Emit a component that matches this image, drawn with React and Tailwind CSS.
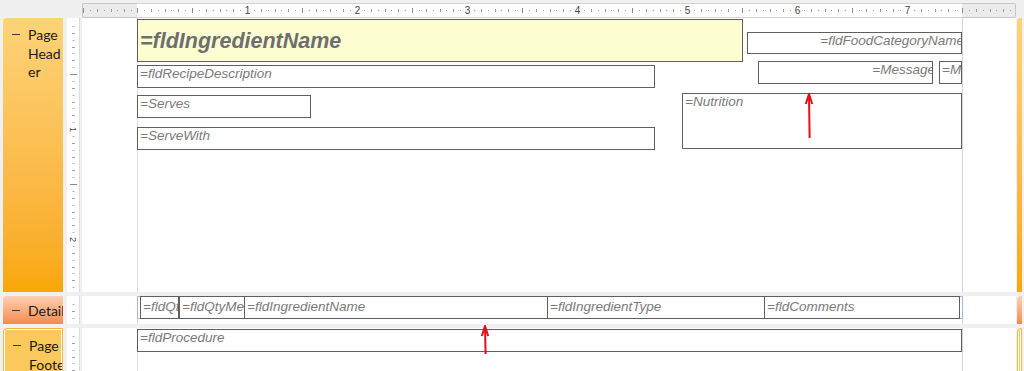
const PPI = 110;
const STEP = PPI / 16;
const ORIGIN_X = 137;

function HTicks({ from, width }) {
  const marks = [];
  const kStart = Math.ceil((from - ORIGIN_X) / STEP);
  const kEnd = Math.floor((from + width - ORIGIN_X) / STEP);
  for (let k = kStart; k <= kEnd; k++) {
    const x = Math.round(ORIGIN_X + k * STEP - from) + 0.5;
    const i = ((k % 16) + 16) % 16;
    if (i === 0 && k > 0) {
      marks.push(
        <text key={k} x={x} y={10} textAnchor="middle" fontSize="10" fill="#444" fontFamily="Liberation Sans, sans-serif">
          {k / 16}
        </text>
      );
    } else if (i === 8 || k === 0) {
      marks.push(<line key={k} x1={x} x2={x} y1={4} y2={9} stroke="#8a8a8a" strokeWidth="1" />);
    } else if (i % 2 === 0) {
      marks.push(<line key={k} x1={x} x2={x} y1={5} y2={8} stroke="#9a9a9a" strokeWidth="1" />);
    } else {
      marks.push(<rect key={k} x={x - 0.5} y={6} width={1} height={1} fill="#9a9a9a" />);
    }
  }
  return (
    <svg width={width} height={13} className="block">
      {marks}
    </svg>
  );
}

function VRuler({ height }) {
  const marks = [];
  const kEnd = Math.floor(height / STEP);
  for (let k = 1; k <= kEnd; k++) {
    const y = Math.round(1 + k * STEP) + 0.5;
    const i = k % 16;
    if (i === 0) {
      marks.push(
        <text
          key={k}
          x={6}
          y={y}
          transform={`rotate(90 6 ${y})`}
          textAnchor="middle"
          dominantBaseline="central"
          fontSize="9"
          fill="#444"
          fontFamily="Liberation Sans, sans-serif"
        >
          {k / 16}
        </text>
      );
    } else if (i === 8) {
      marks.push(<line key={k} x1={3} x2={10} y1={y} y2={y} stroke="#8a8a8a" />);
    } else if (i % 2 === 0) {
      marks.push(<line key={k} x1={5} x2={8} y1={y} y2={y} stroke="#a0a0a0" />);
    } else {
      marks.push(<line key={k} x1={5.5} x2={7.5} y1={y} y2={y} stroke="#b0b0b0" />);
    }
  }
  return (
    <div className="w-[12px] shrink-0 bg-white">
      <svg width={12} height={height} className="block">
        {marks}
      </svg>
    </div>
  );
}

function Band({ lines, className, pt }) {
  return (
    <div className={`ml-[3px] w-[60px] shrink-0 overflow-hidden ${className}`}>
      <div className={`flex gap-[8px] pl-[9px] ${pt}`}>
        <div className="mt-[8px] h-px w-[8px] shrink-0 bg-[#3a3a3a]" />
        <div className="font-['Lato',sans-serif] text-[14px] leading-[18.67px] text-[#1a1a1a]">
          {lines.map((l) => (
            <div key={l} className="whitespace-nowrap">
              {l}
            </div>
          ))}
        </div>
      </div>
    </div>
  );
}

function Field({ text, className, align = "left" }) {
  return (
    <div
      className={`absolute flex overflow-hidden border border-[#5f5f5f] bg-white ${
        align === "right" ? "justify-end" : "pl-[2px]"
      } ${className}`}
    >
      <span className={`whitespace-nowrap text-[13.5px] italic leading-[16px] text-[#7a7a7a] ${align === "right" ? "mr-[-3px]" : ""}`}>
        {text}
      </span>
    </div>
  );
}

// detail row cells sit side by side inside the layout outline
function Cell({ text, width }) {
  return (
    <div className={`flex h-[23px] shrink-0 overflow-hidden border border-[#5f5f5f] bg-white pl-[2px] pt-[2px] ${width}`}>
      <span className="whitespace-nowrap text-[13.5px] italic leading-[16px] text-[#7a7a7a]">{text}</span>
    </div>
  );
}

function Section({ height, band, strip, children }) {
  return (
    <div className="flex" style={{ height }}>
      {band}
      <div className="w-[4px] shrink-0" />
      <VRuler height={height} />
      <div className="w-[3px] shrink-0 border-l border-[#dcdcdc]" />
      <div className="relative w-[934px] shrink-0 overflow-hidden bg-white">
        <div className="absolute left-[55px] top-0 h-full w-px bg-[#dedede]" />
        <div className="absolute left-[880px] top-0 h-full w-px bg-[#d4d4d4]" />
        {children}
      </div>
      <div className="w-[1px] shrink-0" />
      <div className={`w-[5px] shrink-0 ${strip}`} />
    </div>
  );
}

function Arrow({ className, length }) {
  return (
    <svg width={12} height={length} className={`absolute ${className}`}>
      <path d={`M6 1 L6.6 ${length - 1}`} stroke="#e3101c" strokeWidth="2" fill="none" />
      <path d="M2.8 11 L6 1 L9.2 11" stroke="#e3101c" strokeWidth="2" fill="none" strokeLinejoin="miter" />
    </svg>
  );
}

const headerBand = "rounded-tl-[4px] bg-gradient-to-b from-[#fdd378] to-[#f9a700]";
const detailBand = "rounded-tl-[4px] bg-gradient-to-b from-[#fcd0b2] to-[#f58a4c]";
const footerBand = "rounded-tl-[4px] border border-[#f7b53a] bg-[#fbc85c] shadow-[inset_0_0_0_1px_#ffffff]";

export default function App() {
  return (
    <div className="relative h-[371px] w-[1024px] overflow-hidden bg-[#f0f0f0] font-['Liberation_Sans',Arial,sans-serif]">
      <div className="flex h-[18px] items-start pt-[3px]">
        <div className="w-[82px] shrink-0" />
        <div className="w-[55px] shrink-0 rounded-l-[2px] border border-r-0 border-[#c6c6c6] bg-[#ebebeb]">
          <HTicks from={82} width={53} />
        </div>
        <div className="w-[825px] shrink-0 border-y border-[#d4d4d4] bg-white">
          <HTicks from={137} width={825} />
        </div>
        <div className="w-[54px] shrink-0 rounded-r-[2px] border border-l-0 border-[#c6c6c6] bg-[#ebebeb]">
          <HTicks from={962} width={53} />
        </div>
      </div>

      <Section
        height={274}
        strip={headerBand}
        band={<Band className={headerBand} pt="pt-[8px]" lines={["Page", "Head", "er"]} />}
      >
        <div className="absolute left-[55px] top-[1px] flex h-[43px] w-[606px] items-center overflow-hidden border border-[#5f5f5f] bg-[#fdfdd2] pl-[2px] pt-[2px]">
          <span className="whitespace-nowrap text-[21.5px] font-bold italic text-[#6e6e6e]">=fldIngredientName</span>
        </div>
        <Field text="=fldRecipeDescription" className="left-[55px] top-[47px] h-[23px] w-[518px]" />
        <Field text="=Serves" className="left-[55px] top-[77px] h-[23px] w-[174px]" />
        <Field text="=ServeWith" className="left-[55px] top-[109px] h-[23px] w-[518px]" />
        <Field text="=fldFoodCategoryName" align="right" className="left-[665px] top-[14px] h-[22px] w-[215px]" />
        <Field text="=Message" align="right" className="left-[676px] top-[43px] h-[23px] w-[175px]" />
        <Field text="=M" className="left-[857px] top-[43px] h-[23px] w-[23px]" />
        <Field text="=Nutrition" className="left-[600px] top-[75px] h-[56px] w-[280px]" />
      </Section>

      <div className="h-[4px]" />

      <Section
        height={28}
        strip={detailBand}
        band={<Band className={detailBand} pt="pt-[6px]" lines={["Detail"]} />}
      >
        <div className="absolute left-[55px] top-0 flex h-[23px] w-[826px] items-start border border-[#a3bbdf] pl-[2px]">
          <div className="-mt-px flex">
            <Cell text="=fldQty" width="w-[39px]" />
            <Cell text="=fldQtyMeasure" width="w-[66px]" />
            <Cell text="=fldIngredientName" width="w-[304px] -ml-px" />
            <Cell text="=fldIngredientType" width="w-[218px] -ml-px" />
            <Cell text="=fldComments" width="w-[196px] -ml-px" />
          </div>
        </div>
      </Section>

      <div className="h-[4px]" />

      <Section
        height={60}
        strip={footerBand}
        band={<Band className={footerBand} pt="pt-[8px]" lines={["Page", "Foote", "r"]} />}
      >
        <Field text="=fldProcedure" className="left-[55px] top-[1px] h-[23px] w-[825px]" />
      </Section>

      <Arrow className="left-[803px] top-[93px]" length={46} />
      <Arrow className="left-[479px] top-[325px]" length={30} />
    </div>
  );
}
